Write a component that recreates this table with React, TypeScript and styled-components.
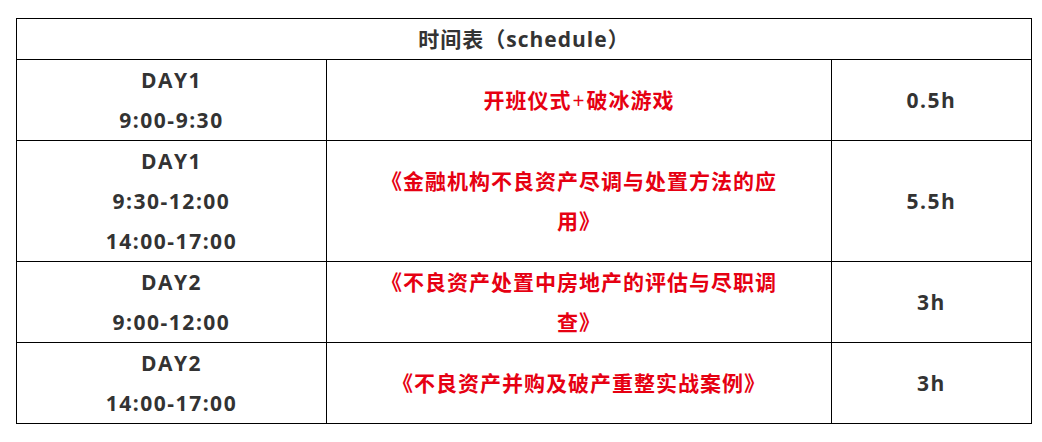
import React from "react";
import styled, { createGlobalStyle } from "styled-components";

const GlobalStyle = createGlobalStyle`
  html, body {
    margin: 0;
    padding: 0;
    background: #ffffff;
  }
  body {
    font-family: "Open Sans", "Noto Sans CJK SC", sans-serif;
  }
`;

const Page = styled.div`
  padding: 18px 0 0 16px;
`;

const Table = styled.table`
  border-collapse: collapse;
  table-layout: fixed;
  width: 1015px;
  font-family: "Open Sans", "Noto Sans CJK SC", sans-serif;
  font-weight: 700;
  font-size: 21px;
  letter-spacing: 1px;
  line-height: 40px;
  color: #333333;
`;

const Col = styled.col<{ $w: number }>`
  width: ${(p) => p.$w}px;
`;

const TitleCell = styled.th`
  border: 1px solid #000000;
  padding: 0;
  text-align: center;
  font-weight: 700;
`;

const Cell = styled.td<{ $red?: boolean; $wide?: boolean }>`
  border: 1px solid #000000;
  padding: ${(p) => (p.$wide ? "0 50px" : "0")};
  text-align: center;
  vertical-align: middle;
  letter-spacing: ${(p) => (p.$wide ? "1px" : "1.5px")};
  color: ${(p) => (p.$red ? "#e60012" : "#333333")};
`;

const Line = styled.div`
  display: block;
`;

const Plus = styled.span`
  font-weight: 400;
  padding: 0 1px;
`;

type Row = { times: string[]; topic: React.ReactNode; hours: string };

const rows: Row[] = [
  {
    times: ["DAY1", "9:00-9:30"],
    topic: (
      <>
        开班仪式<Plus>+</Plus>破冰游戏
      </>
    ),
    hours: "0.5h",
  },
  {
    times: ["DAY1", "9:30-12:00", "14:00-17:00"],
    topic: "《金融机构不良资产尽调与处置方法的应用》",
    hours: "5.5h",
  },
  {
    times: ["DAY2", "9:00-12:00"],
    topic: "《不良资产处置中房地产的评估与尽职调查》",
    hours: "3h",
  },
  {
    times: ["DAY2", "14:00-17:00"],
    topic: "《不良资产并购及破产重整实战案例》",
    hours: "3h",
  },
];

export default function App() {
  return (
    <>
      <GlobalStyle />
      <Page>
        <Table>
          <colgroup>
            <Col $w={310} />
            <Col $w={505} />
            <Col $w={200} />
          </colgroup>
          <thead>
            <tr>
              <TitleCell colSpan={3}>时间表（schedule）</TitleCell>
            </tr>
          </thead>
          <tbody>
            {rows.map((r, i) => (
              <tr key={i}>
                <Cell>
                  {r.times.map((t) => (
                    <Line key={t}>{t}</Line>
                  ))}
                </Cell>
                <Cell $red $wide>
                  {r.topic}
                </Cell>
                <Cell>{r.hours}</Cell>
              </tr>
            ))}
          </tbody>
        </Table>
      </Page>
    </>
  );
}
